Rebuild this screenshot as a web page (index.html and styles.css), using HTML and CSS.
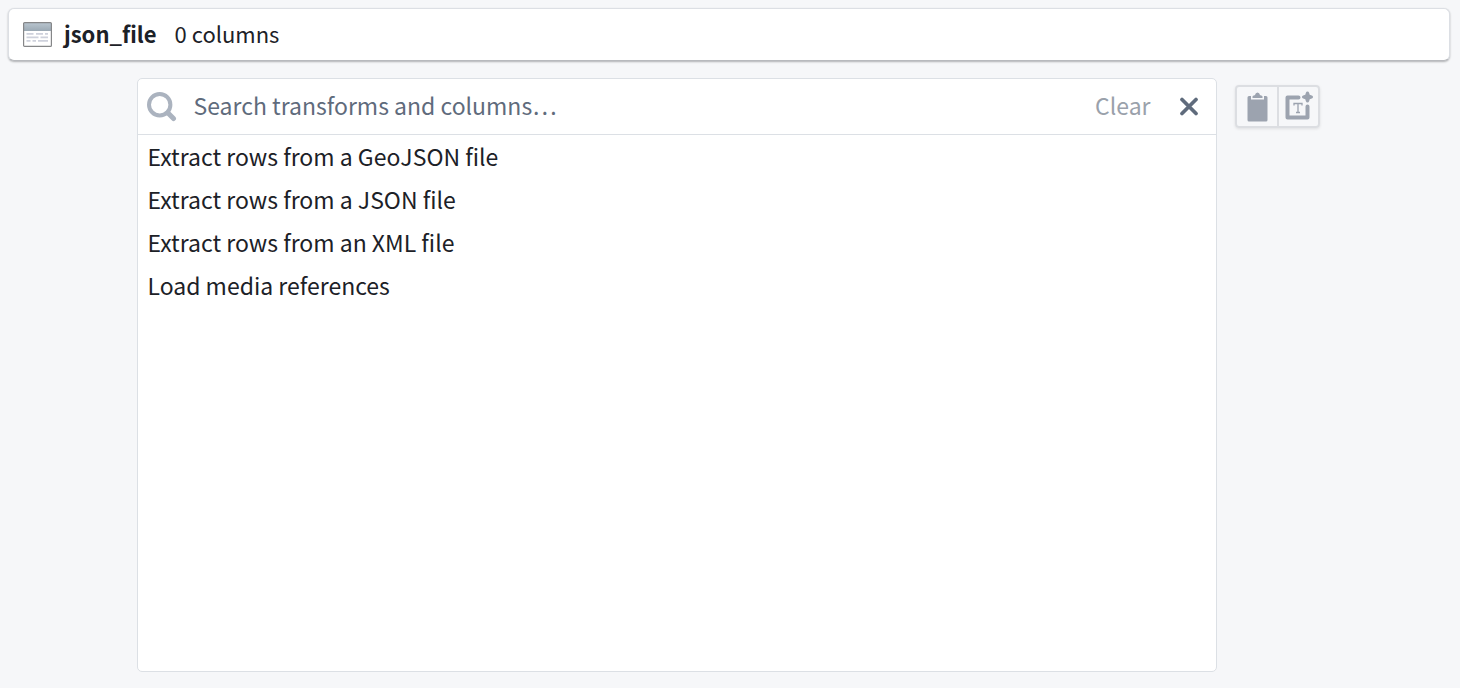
FILE: index.html
```html
<!DOCTYPE html>
<html lang="en">

<head>
  <meta charset="UTF-8" />
  <meta name="viewport" content="width=device-width, initial-scale=1" />
  <title>json_file</title>
  <link rel="stylesheet" href="styles.css">
</head>

<body>
  <header class="dataset-bar">
    <svg class="dataset-icon" width="29" height="25" viewBox="0 0 29 25" aria-hidden="true">
      <defs>
        <linearGradient id="tableHead" x1="0" y1="0" x2="0" y2="1">
          <stop offset="0" stop-color="#b8c4ce" />
          <stop offset="1" stop-color="#9ba9b4" />
        </linearGradient>
      </defs>
      <rect x="1" y="1" width="27" height="23" fill="#fff" />
      <rect x="1" y="1" width="27" height="8" fill="url(#tableHead)" />
      <path d="M3.500 11.800h7M13 11.800h7M22 11.800h3M3.500 15.300h12M17.500 15.300h7.500M3.500 18.800h4M9.500 18.800h3.500M15 18.800h10" stroke="#ced1dc" stroke-width="1.700" fill="none" />
      <rect x="0.600" y="0.600" width="27.800" height="23.800" rx="1" fill="none" stroke="#858688" stroke-width="1.200" />
    </svg>
    <h1 class="dataset-name">json_file</h1>
    <span class="dataset-count">0 columns</span>
  </header>

  <main class="workspace">
    <section class="transform-panel">
      <div class="search-row">
        <svg class="search-icon" width="30" height="30" viewBox="0 0 30 30" aria-hidden="true">
          <circle cx="12.700" cy="12.700" r="10.700" fill="none" stroke="#abb3bf" stroke-width="4" />
          <path d="M21 21l5.500 5.500" stroke="#abb3bf" stroke-width="5" stroke-linecap="round" />
        </svg>
        <input class="search-input" type="text" placeholder="Search transforms and columns…" aria-label="Search transforms and columns" autocomplete="off" />
        <button class="clear-button" type="button">Clear</button>
        <button class="close-button" type="button" aria-label="Close">
          <svg width="20" height="20" viewBox="0 0 20 20" aria-hidden="true">
            <path d="M3 2.500l14 14M17 2.500L3 16.500" stroke="#5f6b7c" stroke-width="3.700" stroke-linecap="round" />
          </svg>
        </button>
      </div>
      <ul class="transform-list">
        <li><button class="transform-item" type="button">Extract rows from a GeoJSON file</button></li>
        <li><button class="transform-item" type="button">Extract rows from a JSON file</button></li>
        <li><button class="transform-item" type="button">Extract rows from an XML file</button></li>
        <li><button class="transform-item" type="button">Load media references</button></li>
      </ul>
    </section>

    <div class="tool-group">
      <button class="tool-button" type="button" aria-label="Paste">
        <svg width="32" height="32" viewBox="0 0 32 32" aria-hidden="true">
          <path d="M11.500 7V5.500q.3-1 1.500-1l1-.5q.5-2.500 2.500-2.500T19 4l1 .5q1.200 0 1.500 1V7z" fill="#9ca3af" />
          <path d="M10 5v3.500h13V5h2a1.500 1.500 0 0 1 1.500 1.500V29a1.500 1.500 0 0 1-1.500 1.500H8A1.500 1.500 0 0 1 6.500 29V6.500A1.500 1.500 0 0 1 8 5z" fill="#9ca3af" />
        </svg>
      </button>
      <button class="tool-button" type="button" aria-label="Add transform">
        <svg width="32" height="32" viewBox="0 0 32 32" aria-hidden="true">
          <path d="M16.500 6.500H5.500v20h20V15.500" fill="none" stroke="#9ca3af" stroke-width="4" stroke-linecap="round" stroke-linejoin="round" />
          <path d="M12 14.500v-2h8v2M16 12.500v9M14 21.500h4" fill="none" stroke="#9ca3af" stroke-width="1.300" />
          <path d="M25.500.5q1.200 0 1.600 1.200l.6 2.100 2.100.6q1.200.4 1.200 1.600t-1.200 1.600l-2.100.6-.6 2.100q-.4 1.200-1.600 1.200t-1.600-1.200l-.6-2.100-2.100-.6q-1.200-.4-1.200-1.600t1.200-1.600l2.100-.6.6-2.100q.4-1.200 1.600-1.200z" fill="#9ca3af" />
        </svg>
      </button>
    </div>
  </main>
</body>

</html>
```
FILE: styles.css
```css
* {
  box-sizing: border-box;
}

body {
  margin: 0;
  min-height: 100vh;
  padding: 8px 10px 16px 8px;
  display: flex;
  flex-direction: column;
  gap: 17px;
  background: #f6f7f9;
  color: #1c2127;
  font-family: "Noto Sans CJK SC", "Open Sans", sans-serif;
  font-size: 23px;
  line-height: 28px;
}

button,
input {
  margin: 0;
  padding: 0;
  border: 0;
  background: none;
  color: inherit;
  font: inherit;
}

button {
  cursor: pointer;
}

svg {
  display: block;
}

.dataset-bar {
  display: flex;
  align-items: center;
  padding: 10px 14px 9px;
  background: #fff;
  border: 1px solid #dcdfe4;
  border-bottom-color: #b8babe;
  border-radius: 6px;
  box-shadow: 0 1px 2px rgba(17, 20, 24, 0.3);
  font-size: 22px;
}

.dataset-icon {
  flex: none;
  margin-bottom: 2px;
}

.dataset-name {
  margin: 0 18px 0 12px;
  font-size: inherit;
  font-weight: bold;
}

.dataset-name,
.dataset-count {
  padding-bottom: 4px;
}

.workspace {
  flex: 1;
  display: flex;
  justify-content: center;
  align-items: stretch;
  gap: 18px;
  padding-right: 2px;
}

.transform-panel {
  flex: 0 1 1080px;
  min-width: 0;
  background: #fff;
  border: 1px solid #dce0e5;
  border-radius: 5px;
}

.search-row {
  display: flex;
  align-items: center;
  height: 56px;
  padding: 0 17px 0 9px;
  border-bottom: 1px solid #dce0e5;
}

.search-icon {
  flex: none;
}

.search-input {
  flex: 1;
  min-width: 0;
  margin: 0 17px;
  height: 34px;
  padding-bottom: 4px;
  outline: none;
}

.search-input::placeholder {
  color: #5f6b7c;
  opacity: 1;
}

.clear-button {
  margin-right: 28px;
  padding-bottom: 4px;
  color: #9aa1ab;
}

.transform-list {
  margin: 0;
  padding: 2px 0;
  list-style: none;
}

.transform-item {
  display: block;
  width: 100%;
  height: 43px;
  padding: 0 10px 6px;
  text-align: left;
}

.transform-item:hover {
  background: #f1f3f6;
}

.tool-group {
  flex: none;
  align-self: flex-start;
  display: flex;
  margin-top: 7px;
  border: 2px solid #dcdee2;
  border-radius: 4px;
  box-shadow: 0 1px 3px rgba(17, 20, 24, 0.1);
}

.tool-button {
  display: grid;
  place-items: center;
  width: 40px;
  height: 39px;
}

.tool-button + .tool-button {
  width: 41px;
  border-left: 2px solid #dcdee2;
}
```
